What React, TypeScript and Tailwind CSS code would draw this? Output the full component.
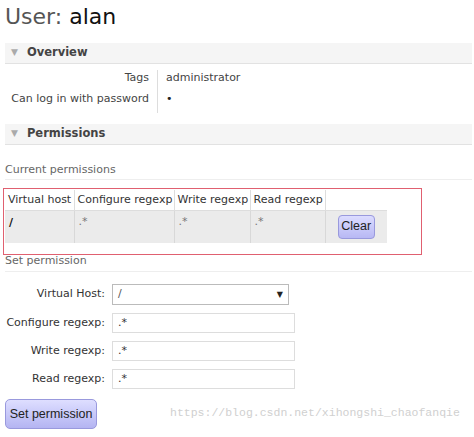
function SectionHeader({ title }: { title: string }) {
  return (
    <div className="flex items-center h-[21px] bg-[#f5f5f5] border-b border-[#e2e2e2] pl-[6px]">
      <span className="text-[#aaa] text-[9px] mr-[9px]">▼</span>
      <span className="font-bold text-[#444] text-[11.5px]">{title}</span>
    </div>
  );
}

export default function App() {
  return (
    <div className="w-[474px] h-[437px] bg-white pl-[5px] pr-[2px] text-[#444] font-['DejaVu_Sans',Verdana,sans-serif] text-[11px] relative overflow-hidden">
      <h1 className="text-[22px] leading-[28px] pt-[3px] font-normal">
        <span className="text-[#555]">User: </span>
        <span className="text-[#111]">alan</span>
      </h1>

      <div className="mt-[12px]">
        <SectionHeader title="Overview" />
        <div className="flex mt-[6px] h-[43px]">
          <div className="w-[144px] text-right flex flex-col pt-[1px] gap-[7px] leading-[14px]">
            <span>Tags</span>
            <span>Can log in with password</span>
          </div>
          <div className="ml-[8px] border-l border-[#ddd] pl-[8px] flex flex-col pt-[1px] gap-[7px] leading-[14px]">
            <span>administrator</span>
            <span className="text-[#222]">•</span>
          </div>
        </div>
      </div>

      <div className="mt-[11px]">
        <SectionHeader title="Permissions" />
      </div>

      <div className="mt-[18px] text-[#666] leading-[14px] pb-[2px] border-b border-[#eee]">
        Current permissions
      </div>

      <div className="mt-[8px] -ml-[2px] w-[419px] h-[67px] border border-[#e06070] pl-[1px] pt-[1px]">
        <table className="border-collapse table-fixed text-[#333] text-[11px] whitespace-nowrap w-[382px]">
          <colgroup>
            <col className="w-[69px]" />
            <col className="w-[100px]" />
            <col className="w-[76px]" />
            <col className="w-[75px]" />
            <col className="w-[62px]" />
          </colgroup>
          <thead>
            <tr className="h-[20px]">
              <th className="font-normal text-left px-[3px] border-r border-[#ddd]">Virtual host</th>
              <th className="font-normal text-left px-[3px] border-r border-[#ddd]">Configure regexp</th>
              <th className="font-normal text-left px-[3px] border-r border-[#ddd]">Write regexp</th>
              <th className="font-normal text-left px-[3px] border-r border-[#ddd]">Read regexp</th>
              <th></th>
            </tr>
          </thead>
          <tbody>
            <tr className="h-[33px] bg-[#ebebeb] border-t border-[#ddd] align-top">
              <td className="px-[4px] pt-[4px] border-r border-[#d8d8d8] font-bold text-[#111]">/</td>
              <td className="px-[4px] pt-[3px] border-r border-[#d8d8d8] text-[#777]">.*</td>
              <td className="px-[4px] pt-[3px] border-r border-[#d8d8d8] text-[#777]">.*</td>
              <td className="px-[4px] pt-[3px] border-r border-[#d8d8d8] text-[#777]">.*</td>
              <td className="align-middle text-center">
                <button className="h-[24px] w-[37px] rounded-[4px] border border-[#9999dd] bg-gradient-to-b from-[#dcdcff] to-[#b8b8f4] font-['Liberation_Sans',Arial,sans-serif] text-[12.5px] text-[#222]">
                  Clear
                </button>
              </td>
            </tr>
          </tbody>
        </table>
      </div>

      <div className="mt-[-1px] text-[#666] leading-[14px] pb-[3px] border-b border-[#eee]">
        Set permission
      </div>

      <div className="mt-[12px] flex flex-col gap-[8px]">
        <div className="flex items-center h-[21px]">
          <label className="w-[100px] text-right text-[#333]">Virtual Host:</label>
          <div className="ml-[7px] w-[177px] h-[21px] border border-[#bbb] flex items-center justify-between px-[5px] text-[#555]">
            <span>/</span>
            <span className="text-[8px] text-[#222]">▼</span>
          </div>
        </div>
        <div className="flex items-center h-[20px]">
          <label className="w-[100px] text-right text-[#333]">Configure regexp:</label>
          <div className="ml-[7px] w-[183px] h-[20px] border border-[#ddd] flex items-center px-[5px] text-[#333]">.*</div>
        </div>
        <div className="flex items-center h-[20px]">
          <label className="w-[100px] text-right text-[#333]">Write regexp:</label>
          <div className="ml-[7px] w-[183px] h-[20px] border border-[#ddd] flex items-center px-[5px] text-[#333]">.*</div>
        </div>
        <div className="flex items-center h-[20px]">
          <label className="w-[100px] text-right text-[#333]">Read regexp:</label>
          <div className="ml-[7px] w-[183px] h-[20px] border border-[#ddd] flex items-center px-[5px] text-[#333]">.*</div>
        </div>
      </div>

      <div className="mt-[10px] flex items-end">
        <button className="w-[92px] h-[30px] rounded-[5px] border border-[#9999dd] bg-gradient-to-b from-[#dedeff] to-[#b4b4f2] font-['Liberation_Sans',Arial,sans-serif] text-[12.5px] text-[#222]">
          Set permission
        </button>
        <span className="ml-[73px] mb-[8px] font-['Liberation_Mono',monospace] text-[11.5px] text-[#d0d0d0]">
          https://blog.csdn.net/xihongshi_chaofanqie
        </span>
      </div>
    </div>
  );
}
